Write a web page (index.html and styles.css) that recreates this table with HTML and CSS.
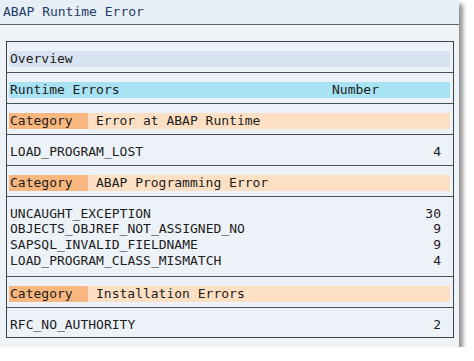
FILE: index.html
```html
<!DOCTYPE html>
<html lang="en">
<head>
    <meta charset="UTF-8">
    <title>ABAP Runtime Error</title>
    <link rel="stylesheet" href="styles.css">
</head>
<body>
    <div class="window">
        <div class="title-bar">ABAP Runtime Error</div>

        <div class="content">
            <div class="list-box">
                <div class="section">
                    <div class="band band-overview">Overview</div>
                </div>

                <div class="section">
                    <div class="band band-header">
                        <span>Runtime Errors</span>
                        <span class="header-number">Number</span>
                    </div>
                </div>

                <div class="section">
                    <div class="band band-category">
                        <span class="category-key">Category</span>
                        <span class="category-text">Error at ABAP Runtime</span>
                    </div>
                </div>
                <div class="section">
                    <div class="row"><span>LOAD_PROGRAM_LOST</span><span>4</span></div>
                </div>

                <div class="section">
                    <div class="band band-category">
                        <span class="category-key">Category</span>
                        <span class="category-text">ABAP Programming Error</span>
                    </div>
                </div>
                <div class="section section-rows">
                    <div class="row"><span>UNCAUGHT_EXCEPTION</span><span>30</span></div>
                    <div class="row"><span>OBJECTS_OBJREF_NOT_ASSIGNED_NO</span><span>9</span></div>
                    <div class="row"><span>SAPSQL_INVALID_FIELDNAME</span><span>9</span></div>
                    <div class="row"><span>LOAD_PROGRAM_CLASS_MISMATCH</span><span>4</span></div>
                </div>

                <div class="section">
                    <div class="band band-category">
                        <span class="category-key">Category</span>
                        <span class="category-text">Installation Errors</span>
                    </div>
                </div>
                <div class="section">
                    <div class="row"><span>RFC_NO_AUTHORITY</span><span>2</span></div>
                </div>
            </div>
        </div>
    </div>
</body>
</html>
```

FILE: styles.css
```css
/* General Styles */
body {
    margin: 0;
    background: #ffffff;
    font-family: "DejaVu Sans Mono", monospace;
    font-size: 13px;
    color: #1c1c1c;
}

.window {
    width: 459px;
    height: 347px;
    background: #eef3f8;
    box-shadow: 4px 4px 4px rgba(60, 60, 60, 0.55);
    display: flex;
    flex-direction: column;
}

.title-bar {
    height: 24px;
    line-height: 24px;
    padding-left: 3px;
    background: #e7eef6;
    border-bottom: 1px solid #5e636a;
    color: #1f3b66;
}

.content {
    padding: 16px 5px 0 6px;
}

/* List box */
.list-box {
    border: 1px solid #3e434a;
    background: #edf2f8;
}

.section {
    padding: 9px 3px 5px 2px;
    border-top: 1px solid #4a4f56;
}

.section:first-child {
    border-top: none;
}

.section-rows {
    padding-bottom: 7px;
}

.band {
    height: 16px;
    line-height: 16px;
    padding-left: 1px;
    display: flex;
}

.band-overview {
    background: #d7e3f0;
}

.band-header {
    background: #a7e3f3;
    justify-content: space-between;
}

.header-number {
    padding-right: 71px;
}

.band-category {
    background: #fde0c3;
    padding-left: 0;
}

.category-key {
    width: 78px;
    padding-left: 1px;
    background: #f9b77f;
}

.category-text {
    padding-left: 8px;
}

.row {
    display: flex;
    justify-content: space-between;
    line-height: 15.7px;
    padding: 0 9px 0 1px;
}
```
